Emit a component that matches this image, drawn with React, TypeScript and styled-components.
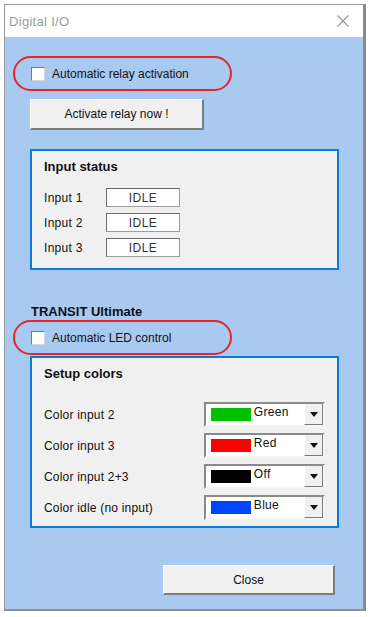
import React from 'react'
import styled, { createGlobalStyle } from 'styled-components'

const GlobalStyle = createGlobalStyle`
  html, body {
    margin: 0;
    padding: 0;
    background: #ffffff;
  }
  body {
    font-family: 'Liberation Sans', Arial, sans-serif;
    font-size: 12px;
    color: #111;
  }
`

interface ColorRow {
  label: string
  name: string
  swatch: string
}

const colorRows: ColorRow[] = [
  { label: 'Color input 2', name: 'Green', swatch: '#00c000' },
  { label: 'Color input 3', name: 'Red', swatch: '#ff0000' },
  { label: 'Color input 2+3', name: 'Off', swatch: '#000000' },
  { label: 'Color idle (no input)', name: 'Blue', swatch: '#0044ff' },
]

function CheckOption({ label }: { label: string }) {
  return (
    <Highlight>
      <CheckBox />
      <CheckLabel>{label}</CheckLabel>
    </Highlight>
  )
}

export default function App() {
  return (
    <>
      <GlobalStyle />
      <Window>
        <TitleBar>
          <Title>Digital I/O</Title>
          <CloseIcon width="14" height="14" viewBox="0 0 14 14">
            <path d="M1.5 1.5 L12.5 12.5 M12.5 1.5 L1.5 12.5" stroke="#9a9a9a" strokeWidth="1.2" fill="none" />
          </CloseIcon>
        </TitleBar>
        <Body>
          <CheckOption label="Automatic relay activation" />
          <RelayButton>Activate relay now !</RelayButton>

          <GroupBox $height={121}>
            <GroupTitle>Input status</GroupTitle>
            <StatusList>
              {[1, 2, 3].map((n) => (
                <StatusRow key={n}>
                  <StatusLabel>Input {n}</StatusLabel>
                  <StatusBox>IDLE</StatusBox>
                </StatusRow>
              ))}
            </StatusList>
          </GroupBox>

          <SectionTitle>TRANSIT Ultimate</SectionTitle>
          <CheckOption label="Automatic LED control" />

          <GroupBox $height={172} $tight>
            <GroupTitle>Setup colors</GroupTitle>
            <ColorList>
              {colorRows.map((row) => (
                <ColorRowLine key={row.label}>
                  <ColorLabel>{row.label}</ColorLabel>
                  <Combo>
                    <Swatch style={{ background: row.swatch }} />
                    <ComboText>{row.name}</ComboText>
                    <ComboArrow>
                      <svg width="8" height="5" viewBox="0 0 8 5">
                        <path d="M0 0 H8 L4 5 Z" fill="#111" />
                      </svg>
                    </ComboArrow>
                  </Combo>
                </ColorRowLine>
              ))}
            </ColorList>
          </GroupBox>

          <Footer>
            <CloseButton>Close</CloseButton>
          </Footer>
        </Body>
      </Window>
    </>
  )
}

const Window = styled.div`
  box-sizing: border-box;
  margin: 4px 0 0 4px;
  width: 362px;
  height: 607px;
  display: flex;
  flex-direction: column;
  border: 1px solid #9a9a9a;
  border-right: 3px solid #8a8a8a;
  border-bottom: 2px solid #8f8f8f;
  background: #a8c9f0;
`

const TitleBar = styled.div`
  height: 32px;
  flex: none;
  display: flex;
  align-items: center;
  justify-content: space-between;
  padding: 0 13px 0 4px;
  background: #ffffff;
`

const Title = styled.span`
  font-size: 13px;
  color: #9c9c9c;
  letter-spacing: 0.3px;
`

const CloseIcon = styled.svg`
  display: block;
`

const Body = styled.div`
  flex: 1;
  display: flex;
  flex-direction: column;
  align-items: flex-start;
  padding: 19px 0 0 25px;
`

const Highlight = styled.div`
  box-sizing: border-box;
  margin-left: -17px;
  width: 219px;
  height: 35px;
  display: flex;
  align-items: center;
  gap: 7px;
  padding-left: 16px;
  border: 2px solid #e8232c;
  border-radius: 18px;
`

const CheckBox = styled.span`
  box-sizing: border-box;
  width: 14px;
  height: 14px;
  background: #ffffff;
  border: 1px solid #7a7a7a;
  border-right-color: #d6d6d6;
  border-bottom-color: #d6d6d6;
`

const CheckLabel = styled.span`
  font-size: 12px;
  color: #111;
`

const RaisedButton = styled.button`
  box-sizing: border-box;
  font-family: 'Liberation Sans', Arial, sans-serif;
  font-size: 12px;
  color: #111;
  background: #f0f0f0;
  border: 1px solid #ffffff;
  border-right: 2px solid #7d7d7d;
  border-bottom: 2px solid #7d7d7d;
  padding: 0;
`

const RelayButton = styled(RaisedButton)`
  margin-top: 8px;
  width: 174px;
  height: 31px;
`

const GroupBox = styled.div<{ $height: number; $tight?: boolean }>`
  box-sizing: border-box;
  margin-top: ${(p) => (p.$tight ? 1 : 19)}px;
  width: 309px;
  height: ${(p) => p.$height}px;
  padding: 8px 12px 0;
  border: 2px solid #0a7cd6;
  background: #f0f0f0;
`

const GroupTitle = styled.div`
  font-size: 13px;
  font-weight: bold;
  line-height: 16px;
  color: #111;
`

const StatusList = styled.div`
  margin-top: 10px;
  display: flex;
  flex-direction: column;
`

const StatusRow = styled.div`
  display: flex;
  align-items: center;
  height: 25px;
`

const StatusLabel = styled.span`
  width: 62px;
  font-size: 12px;
  letter-spacing: 0.3px;
`

const StatusBox = styled.div`
  box-sizing: border-box;
  width: 74px;
  height: 19px;
  display: flex;
  align-items: center;
  justify-content: center;
  background: #ffffff;
  border: 1px solid #6a6a6a;
  border-right-color: #9c9c9c;
  border-bottom-color: #9c9c9c;
  font-size: 12px;
  color: #333;
  letter-spacing: 0.5px;
`

const SectionTitle = styled.div`
  margin: 34px 0 0 1px;
  font-size: 13px;
  font-weight: bold;
  line-height: 16px;
  color: #111;
`

const ColorList = styled.div`
  margin-top: 20px;
  display: flex;
  flex-direction: column;
  gap: 6px;
`

const ColorRowLine = styled.div`
  display: flex;
  align-items: center;
  height: 25px;
`

const ColorLabel = styled.span`
  width: 161px;
  font-size: 12px;
  letter-spacing: 0.2px;
`

const Combo = styled.div`
  box-sizing: border-box;
  width: 122px;
  height: 25px;
  display: flex;
  align-items: center;
  padding-left: 5px;
  background: #ffffff;
  border: 2px solid #8a8a8a;
  border-right-color: #f4f4f4;
  border-bottom-color: #f4f4f4;
`

const Swatch = styled.span`
  width: 40px;
  height: 13px;
  flex: none;
`

const ComboText = styled.span`
  flex: 1;
  margin-left: 3px;
  font-size: 12px;
  line-height: 13px;
  align-self: flex-start;
  margin-top: 2px;
  letter-spacing: 0.3px;
`

const ComboArrow = styled.span`
  box-sizing: border-box;
  width: 19px;
  height: 21px;
  display: flex;
  align-items: center;
  justify-content: center;
  background: #f0f0f0;
  border-left: 1px solid #ffffff;
  border-right: 1px solid #7d7d7d;
  border-bottom: 1px solid #7d7d7d;
`

const Footer = styled.div`
  align-self: stretch;
  display: flex;
  justify-content: flex-end;
  padding-right: 28px;
  margin-top: 37px;
`

const CloseButton = styled(RaisedButton)`
  width: 172px;
  height: 30px;
`
